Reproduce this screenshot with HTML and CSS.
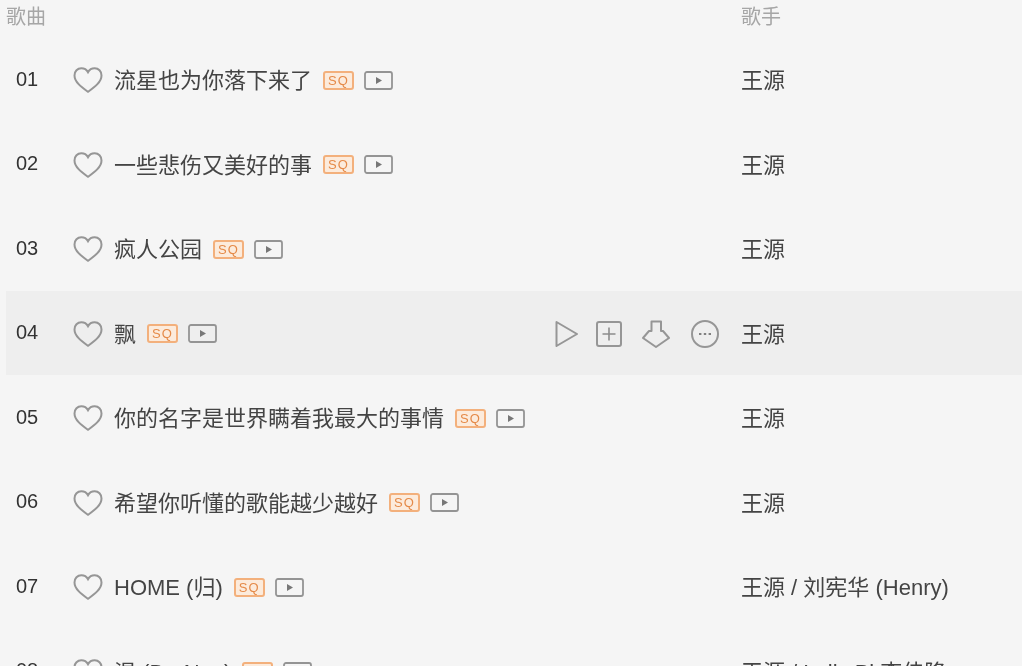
FILE: index.html
```html
<!DOCTYPE html>
<html lang="zh-CN">
<head>
  <meta charset="UTF-8">
  <title>歌曲列表</title>
  <link rel="stylesheet" href="styles.css">
</head>
<body>
  <svg class="defs" xmlns="http://www.w3.org/2000/svg">
    <defs>
      <symbol id="heart" viewBox="0 0 30 26">
        <path d="M15 24.800C8.500 20 1.500 15 1.500 8.400 1.500 4.300 4.500 1.300 8.300 1.300c2.900 0 5.300 1.300 6.700 3.900 1.400-2.600 3.800-3.900 6.700-3.900 3.800 0 6.800 3 6.800 7.100 0 6.600-7 11.600-13.500 16.400z" fill="none" stroke="#969696" stroke-width="2"/>
      </symbol>
      <symbol id="mv" viewBox="0 0 29 19">
        <rect x="1" y="1" width="27" height="17" rx="2" fill="none" stroke="#949494" stroke-width="1.800"/>
        <path d="M12 6l6 3.500-6 3.500z" fill="#777"/>
      </symbol>
    </defs>
  </svg>

  <div class="head">
    <span class="col-song">歌曲</span>
    <span class="col-artist">歌手</span>
  </div>

  <div class="row">
    <span class="num">01</span>
    <svg class="heart"><use href="#heart"/></svg>
    <div class="song"><span class="title">流星也为你落下来了</span><span class="sq">SQ</span><svg class="mv"><use href="#mv"/></svg></div>
    <span class="artist">王源</span>
  </div>
  <div class="row">
    <span class="num">02</span>
    <svg class="heart"><use href="#heart"/></svg>
    <div class="song"><span class="title">一些悲伤又美好的事</span><span class="sq">SQ</span><svg class="mv"><use href="#mv"/></svg></div>
    <span class="artist">王源</span>
  </div>
  <div class="row">
    <span class="num">03</span>
    <svg class="heart"><use href="#heart"/></svg>
    <div class="song"><span class="title">疯人公园</span><span class="sq">SQ</span><svg class="mv"><use href="#mv"/></svg></div>
    <span class="artist">王源</span>
  </div>
  <div class="row active">
    <span class="num">04</span>
    <svg class="heart"><use href="#heart"/></svg>
    <div class="song"><span class="title">飘</span><span class="sq">SQ</span><svg class="mv"><use href="#mv"/></svg></div>
    <div class="tools">
      <svg class="tool" viewBox="0 0 28 28"><path d="M4.500 2L25 14 4.500 26z" fill="none" stroke="#969696" stroke-width="2" stroke-linejoin="round"/></svg>
      <svg class="tool add" viewBox="0 0 28 28"><rect x="2" y="2" width="24" height="24" rx="2" fill="none" stroke="#969696" stroke-width="2"/><path d="M14 7.500v13M7.500 14h13" stroke="#8c8c8c" stroke-width="1.600"/></svg>
      <svg class="tool down" viewBox="0 0 28 28"><path d="M9.500 1.500h9.500v9.500h2L27 18 14 27 1 18 7 11h2.500z" fill="none" stroke="#969696" stroke-width="2" stroke-linejoin="round"/></svg>
      <svg class="tool more" viewBox="0 0 28 28"><circle cx="14" cy="14" r="13" fill="none" stroke="#969696" stroke-width="2"/><path d="M8 14h2.400M12.800 14h2.400M17.600 14h2.400" stroke="#808080" stroke-width="2"/></svg>
    </div>
    <span class="artist">王源</span>
  </div>
  <div class="row">
    <span class="num">05</span>
    <svg class="heart"><use href="#heart"/></svg>
    <div class="song"><span class="title">你的名字是世界瞒着我最大的事情</span><span class="sq">SQ</span><svg class="mv"><use href="#mv"/></svg></div>
    <span class="artist">王源</span>
  </div>
  <div class="row">
    <span class="num">06</span>
    <svg class="heart"><use href="#heart"/></svg>
    <div class="song"><span class="title">希望你听懂的歌能越少越好</span><span class="sq">SQ</span><svg class="mv"><use href="#mv"/></svg></div>
    <span class="artist">王源</span>
  </div>
  <div class="row">
    <span class="num">07</span>
    <svg class="heart"><use href="#heart"/></svg>
    <div class="song"><span class="title">HOME (归)</span><span class="sq">SQ</span><svg class="mv"><use href="#mv"/></svg></div>
    <span class="artist">王源 / 刘宪华 (Henry)</span>
  </div>
  <div class="row">
    <span class="num">08</span>
    <svg class="heart"><use href="#heart"/></svg>
    <div class="song"><span class="title">渴 (Dr. Non)</span><span class="sq">SQ</span><svg class="mv"><use href="#mv"/></svg></div>
    <span class="artist">王源 / Lolly Bi 李佳隆</span>
  </div>
</body>
</html>
```

FILE: styles.css
```css
html, body {margin: 0; height: 100%; overflow: hidden}
body {
  background: #f5f5f5;
  font-family: "Liberation Sans", "Noto Sans CJK SC", sans-serif;
  font-size: 22px;
  color: #444;
  filter: blur(0.5px); /* reference is a soft upscaled capture */
}

.defs {
  display: none;
}

.head {
  display: flex;
  box-sizing: border-box;
  height: 37px;
  padding-bottom: 6px;
  align-items: center;
  font-size: 20px;
  color: #a6a6a6;
}
.col-song {
  width: 741px;
  padding-left: 6px;
  box-sizing: border-box;
}

.row {
  display: flex;
  align-items: center;
  box-sizing: border-box;
  height: 84.5px;
  padding-top: 1.5px;
  margin-left: 6px;
}
.row.active {
  background: #eeeeee;
}

.num {
  width: 67px;
  padding-left: 10px;
  margin-bottom: 2px;
  box-sizing: border-box;
  font-size: 20px;
  color: #333;
}
.heart {
  width: 30px;
  height: 26px;
  margin-right: 11px;
}
.song {
  display: flex;
  align-items: center;
  flex: 1;
  min-width: 0;
}
.title {
  margin-right: 11px;
  margin-bottom: 4px;
  white-space: nowrap;
}
.sq {
  width: 31px;
  height: 19px;
  box-sizing: border-box;
  border: 2px solid #f3b07c;
  border-radius: 3px;
  background: #fcebdc;
  color: #e58a48;
  font-size: 13px;
  letter-spacing: 1px;
  line-height: 15px;
  text-align: center;
  margin-right: 10px;
}
.mv {
  width: 29px;
  height: 19px;
}

.tools {
  display: flex;
  align-items: center;
  margin-right: 22px;
}
.tool {
  width: 28px;
  height: 28px;
}
.add {
  margin-left: 15px;
}
.down {
  margin-left: 19px;
}
.more {
  margin-left: 21px;
}

.artist {
  width: 281px;
  margin-bottom: 4px;
}
```
